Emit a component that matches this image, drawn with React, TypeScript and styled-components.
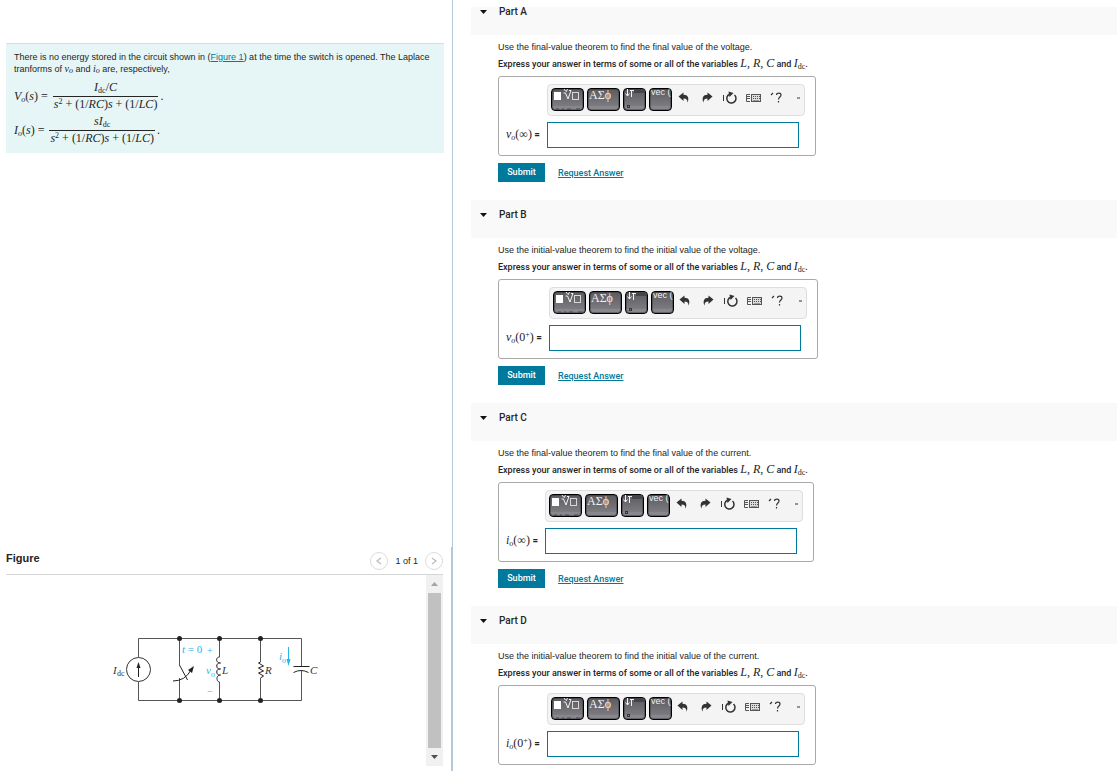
import React from "react";
import styled, { createGlobalStyle, css } from "styled-components";

const teal = "#007a9c";
const sans = '"Liberation Sans", Arial, sans-serif';
const ui = 'Roboto, "Liberation Sans", sans-serif';
const serif = '"Liberation Serif", "Times New Roman", serif';

const GlobalStyle = createGlobalStyle`
  * { box-sizing: border-box; }
  body { margin: 0; background: #fff; color: #252525; font-family: ${sans}; font-size: 9px; }
  button { font: inherit; padding: 0; cursor: pointer; }
  h1, h2, p { margin: 0; font-size: inherit; font-weight: inherit; }
`;

const Page = styled.div`
  display: grid;
  grid-template-columns: minmax(0, 453fr) minmax(0, 664fr);
  min-height: 100vh;
`;

const Left = styled.div`
  display: flex;
  flex-direction: column;
`;

const IntroPane = styled.section`
  flex: 1;
  padding: 43px 8px 0 6px;
  border-right: 1px solid #b3c9db;
`;

const Intro = styled.div`
  height: 110px;
  padding: 8px 8px 0;
  border-top: 1px solid #d4dfe1;
  background: #e6f6f6;
  line-height: 11px;
`;

const Link = styled.a`
  color: ${teal};
  text-decoration: underline;
`;

const RequestLink = styled(Link)`
  font-weight: 500;
  font-family: ${ui};
`;

const MathText = styled.span<{ $small?: boolean }>`
  font-family: ${serif};
  font-size: ${(p) => (p.$small ? 10 : 12)}px;
  line-height: 11px;
  white-space: nowrap;
  sub, sup { font-size: 8px; line-height: 0; }
  sub { vertical-align: ${(p) => (p.$small ? -1 : -2)}px; }
  sup { vertical-align: 4px; }
`;

const Equations = styled.div`
  display: flex;
  flex-direction: column;
  gap: 6px;
  padding-top: 7px;
`;

const Equation = styled.div`
  display: flex;
  align-items: center;
  height: 28px;
`;

const Fraction = styled.span`
  display: flex;
  flex-direction: column;
  align-items: center;
  margin: 0 2px 0 5px;
`;

const Numerator = styled.span`
  height: 14px;
  line-height: 11px;
`;

const Denominator = styled.span`
  height: 14px;
  padding: 2px 1px 0;
  border-top: 1px solid #252525;
  line-height: 11px;
`;

const FigurePane = styled.section`
  height: 224px;
  padding: 4px 8px 5px 6px;
  border-right: 2px solid #b3c9db;
`;

const FigureHead = styled.div`
  display: flex;
  align-items: center;
  height: 24px;
  border-bottom: 1px solid #d6d6d6;
`;

const FigureTitle = styled.h2`
  flex: 1;
  align-self: flex-start;
  font: 700 11px/15px ${sans};
`;

const Pager = styled.div`
  display: flex;
  align-items: center;
  gap: 7px;
  padding-bottom: 3px;
  font: 9px/12px ${sans};
`;

const Round = styled.button`
  display: grid;
  place-items: center;
  width: 18px;
  height: 18px;
  border: 1px solid #dcdcdc;
  border-radius: 50%;
  background: #fff;
`;

const FigureView = styled.div`
  display: flex;
  height: 191px;
`;

const Drawing = styled.div`
  flex: 1;
  padding: 50px 0 0 94px;
  svg { display: block; }
`;

const ScrollTrack = styled.div`
  display: flex;
  flex-direction: column;
  align-items: center;
  width: 17px;
  background: #f1f1f1;
`;

const ScrollButton = styled.button`
  display: grid;
  place-items: center;
  width: 17px;
  height: 18px;
  border: 0;
  background: none;
`;

const Thumb = styled.div`
  flex: 1;
  width: 13px;
  background: #c1c1c1;
`;

const Right = styled.main`
  padding: 7px 0 0 18px;
`;

const PartBlock = styled.section<{ $first: boolean }>`
  height: ${(p) => (p.$first ? 193 : 203)}px;
  &:last-child { height: auto; padding-bottom: 5px; }
`;

const PartHead = styled.header<{ $first: boolean }>`
  display: flex;
  align-items: flex-start;
  gap: 12px;
  height: ${(p) => (p.$first ? 28 : 38)}px;
  padding: ${(p) => (p.$first ? 0 : 10)}px 0 0 9px;
  background: #f9f9f9;
  font: 500 10px/10px ${ui};
`;

const Collapse = styled.button`
  display: grid;
  place-items: center;
  width: 7px;
  height: 10px;
  border: 0;
  background: none;
`;

const PartBody = styled.div`
  padding: 6px 0 0 27px;
`;

const Question = styled.p`
  line-height: 12px;
`;

const Instruction = styled.p`
  height: 12px;
  margin-top: 5px;
  font: 500 9px/12px ${ui};
`;

const AnswerBox = styled.div`
  display: flex;
  align-items: flex-end;
  width: fit-content;
  height: 80px;
  margin-top: 6px;
  padding: 7px 10px 7px 7px;
  border: 1px solid #a9a9a9;
  border-radius: 3px;
`;

const AnswerLabel = styled.label`
  height: 19px;
  padding-right: 7px;
  font: 500 10px/12px ${ui};
  white-space: nowrap;
`;

const Editor = styled.div`
  display: flex;
  flex-direction: column;
  gap: 6px;
`;

const Toolbar = styled.div`
  display: flex;
  align-items: flex-start;
  width: 258px;
  height: 32px;
  padding: 3px 0 0 3px;
  border: 1px solid #dedede;
  border-radius: 4px;
  background: #f4f4f4;
`;

const darkFace = css`
  border: 1px solid #000;
  border-radius: 4px;
  background: linear-gradient(#5c5b60, #79787d 74%, #66656a 76%, #88878e 80%, #88878e);
  box-shadow: inset 0 0 0 1px #2a2a2c66;
`;

const Palette = styled.button<{ $wide?: boolean }>`
  ${darkFace}
  flex: none;
  width: ${(p) => (p.$wide ? 33 : 23)}px;
  height: 23px;
  margin-right: 3px;
  overflow: hidden;
  color: #f2f2f2;
  text-align: left;
  svg { display: block; }
  &:nth-child(4) { margin-right: 0; }
`;

const Glyphs = styled.span<{ $sans?: boolean }>`
  display: block;
  height: 20px;
  padding-left: 1px;
  white-space: pre;
  font: ${(p) => (p.$sans ? `9px/4px ${sans}` : `12px/10px ${serif}`)};
`;

const Tool = styled.button`
  display: grid;
  flex: none;
  place-items: center;
  width: 23px;
  height: 20px;
  border: 0;
  background: none;
  color: #333;
`;

const MoreTool = styled(Tool)`
  justify-items: end;
  width: 13px;
`;

const AnswerInput = styled.input`
  width: 252px;
  height: 26px;
  padding: 0 4px;
  border: 1px solid ${teal};
  background: #fff;
  font: 12px ${serif};
  outline: none;
`;

const Actions = styled.div`
  display: flex;
  align-items: center;
  gap: 13px;
  margin-top: 7px;
`;

const Submit = styled.button`
  width: 47px;
  height: 19px;
  padding-bottom: 1px;
  border: 0;
  background: ${teal};
  color: #fff;
  font: 500 9px/18px ${ui};
`;

function Idc() {
  return <><i>I</i><sub>dc</sub></>;
}

function Denom() {
  return (
    <Denominator>
      <MathText><i>s</i><sup>2</sup> + (1/<i>RC</i>)<i>s</i> + (1/<i>LC</i>)</MathText>
    </Denominator>
  );
}

function Chevron({ flip }: { flip?: boolean }) {
  return (
    <svg width="6" height="8" viewBox="0 0 6 8" fill="none" stroke="#b4bcc4" strokeWidth="1.3">
      <path d={flip ? "M1 1l4 3-4 3" : "M5 1L1 4l4 3"} />
    </svg>
  );
}

function Circuit() {
  return (
    <svg width="220" height="84" viewBox="100 625 220 84" fill="none" stroke="#555" strokeWidth="1" role="img" aria-label="Circuit with current source, switch, inductor, resistor and capacitor">
      <path d="M138.500 657V638.500H301.500V666M138.500 682V700.500H301.500V671M179.500 638V665M179.500 678V700M219.500 638V657M219.500 682V700M260.500 638V662M260.500 678V700" />
      <circle cx="138.500" cy="669.500" r="12" stroke="#333" />
      <path d="M138.500 677V667" stroke="#222" />
      <path d="M138.500 662l-2 6h4z" fill="#222" stroke="none" />
      <path d="M179.500 665l8 15M173 681Q185 681 191 670" stroke="#222" />
      <path d="M194 666l-6 4 4 3z" fill="#222" stroke="none" />
      <path d="M219.500 657c-4 0-4 6 1 6c-5-1-5 7 0 6c-5-1-5 7 0 6c-5 0-4 7-1 7" stroke="#222" />
      <path d="M260.500 662l-2 1 5 3-5 2 5 3-5 2 5 3-3 2" stroke="#222" />
      <path d="M293.500 666.500h16M293.500 672.500q7.500-4 15 0" stroke="#222" />
      <g fill="#222" stroke="none">
        {[179.5, 219.5, 260.5].map((x) => (
          <React.Fragment key={x}>
            <circle cx={x} cy="638.500" r="2.500" />
            <circle cx={x} cy="700.500" r="2.500" />
          </React.Fragment>
        ))}
      </g>
      <path d="M288.500 647v12" stroke="#27b5e8" />
      <path d="M288.500 666l-2-7h4z" fill="#27b5e8" stroke="none" />
      <g fill="#333" stroke="none" fontFamily={serif} fontSize="11" fontStyle="italic">
        <text x="113" y="674">I</text>
        <text x="117" y="676" fontSize="8" fontStyle="normal">dc</text>
        <text x="222" y="674">L</text>
        <text x="265" y="674">R</text>
        <text x="310" y="674">C</text>
      </g>
      <g fill="#27b5e8" stroke="none" fontFamily={serif} fontSize="11" fontStyle="italic">
        <text x="182" y="653">t<tspan fontStyle="normal"> = 0</tspan></text>
        <text x="207" y="654" fontSize="10" fontStyle="normal">+</text>
        <text x="206" y="674">v</text>
        <text x="211" y="677" fontSize="8">o</text>
        <text x="279" y="660">i</text>
        <text x="282" y="663" fontSize="8">o</text>
        <text x="207" y="695" fontSize="10" fontStyle="normal">−</text>
      </g>
    </svg>
  );
}

function TemplateIcon() {
  return (
    <svg width="31" height="21" viewBox="0 0 31 21" fill="none" stroke="#f2f2f2">
      <rect x="2" y="3" width="7" height="8" fill="#fff" stroke="none" />
      <path d="M11.500 4h2l2.500 6 3-8.500M12 0l1.500 2M15.500 0l-1.500 3M17 1.500h2" />
      <rect x="20.500" y="3.500" width="6" height="7" stroke="#d8d8d8" />
      <path d="M4 20h3M10 20h2M15 20h4M24 20h4" stroke="#454449" />
    </svg>
  );
}

function ArrowsIcon() {
  return (
    <svg width="21" height="21" viewBox="0 0 21 21" fill="none" stroke="#f2f2f2">
      <path d="M10 2h11" stroke="#454449" strokeWidth="4" />
      <path d="M3.500 0v7M1.500 4.500l2 2.500 2-2.500M7.500 8V1.500M6 1.500h4" />
      <rect x="3.500" y="16.500" width="2" height="2" stroke="#353438" />
    </svg>
  );
}

function UndoIcon({ redo }: { redo?: boolean }) {
  return (
    <svg width="12" height="12" viewBox="0 0 12 12" fill="currentColor">
      <path
        transform={redo ? "matrix(-1 0 0 1 12 0)" : undefined}
        d="M0.500 4.500L5.500 0.500v2.200c4.500 0 6 3.300 4 8c0-3-1-4.200-4-4.200V9z"
      />
    </svg>
  );
}

function ResetIcon() {
  return (
    <svg width="16" height="14" viewBox="0 0 16 14" fill="none" stroke="currentColor">
      <path d="M1.500 4v6" />
      <path d="M7.500 3.200A4.600 4.600 0 1 0 12.500 4" strokeWidth="1.500" />
      <path d="M6.500 0.500l5 1.500-4 4z" fill="currentColor" stroke="none" />
    </svg>
  );
}

function KeyboardIcon() {
  return (
    <svg width="16" height="10" viewBox="0 0 16 10" fill="none" stroke="#555">
      <path d="M5 1.500h-3.500v7h3.500M2 3.500h3M2 5.500h3" />
      <rect x="6.500" y="1.500" width="9" height="7" fill="#ddd" />
      <path d="M8 3.500h7M8 5.500h7" strokeDasharray="1 1" />
      <path d="M8 7.500h6" stroke="#999" />
    </svg>
  );
}

function HelpIcon() {
  return (
    <svg width="14" height="14" viewBox="0 0 14 14" fill="none" stroke="currentColor" strokeWidth="1.200">
      <path d="M2 4l2-2M7.500 4C7.500 1.500 12 1.500 12 4C12 6 9.500 6 9.500 8.500" />
      <path d="M9.500 10v1.500" />
    </svg>
  );
}

function Part({ name, question, label }: { name: string; question: string; label: React.ReactNode }) {
  const first = name === "A";
  const id = `answer-${name}`;
  return (
    <PartBlock $first={first}>
      <PartHead $first={first}>
        <Collapse aria-label={`Collapse part ${name}`}>
          <svg width="7" height="4" viewBox="0 0 7 4"><path d="M0 0h7L3.500 4z" fill="#111" /></svg>
        </Collapse>
        <h2>Part {name}</h2>
      </PartHead>
      <PartBody>
        <Question>{question}</Question>
        <Instruction>
          Express your answer in terms of some or all of the variables{" "}
          <MathText><i>L</i>, <i>R</i>, <i>C</i></MathText> and <MathText><Idc /></MathText>.
        </Instruction>
        <AnswerBox>
          <AnswerLabel htmlFor={id}><MathText>{label}</MathText> =</AnswerLabel>
          <Editor>
            <Toolbar>
              <Palette $wide aria-label="Templates"><TemplateIcon /></Palette>
              <Palette $wide aria-label="Greek letters"><Glyphs>ΑΣϕ</Glyphs></Palette>
              <Palette aria-label="Arrows"><ArrowsIcon /></Palette>
              <Palette aria-label="Vectors"><Glyphs $sans>vec (</Glyphs></Palette>
              <Tool aria-label="Undo"><UndoIcon /></Tool>
              <Tool aria-label="Redo"><UndoIcon redo /></Tool>
              <Tool aria-label="Reset"><ResetIcon /></Tool>
              <Tool aria-label="Keyboard shortcuts"><KeyboardIcon /></Tool>
              <Tool aria-label="Help"><HelpIcon /></Tool>
              <MoreTool aria-label="More">
                <svg width="3" height="2" viewBox="0 0 3 2"><path d="M0 1h3" stroke="#333" /></svg>
              </MoreTool>
            </Toolbar>
            <AnswerInput id={id} type="text" />
          </Editor>
        </AnswerBox>
        {name !== "D" && (
          <Actions>
            <Submit>Submit</Submit>
            <RequestLink href="#request">Request Answer</RequestLink>
          </Actions>
        )}
      </PartBody>
    </PartBlock>
  );
}

export default function App() {
  return (
    <Page>
      <GlobalStyle />
      <Left>
        <IntroPane>
          <Intro>
            <p>
              There is no energy stored in the circuit shown in (<Link href="#figure">Figure 1</Link>) at the time the switch is opened. The Laplace tranforms of{" "}
              <MathText $small><i>v</i><sub><i>o</i></sub></MathText> and <MathText $small><i>i</i><sub><i>o</i></sub></MathText> are, respectively,
            </p>
            <Equations>
              <Equation>
                <MathText><i>V</i><sub><i>o</i></sub>(<i>s</i>) =</MathText>
                <Fraction>
                  <Numerator><MathText><Idc />/<i>C</i></MathText></Numerator>
                  <Denom />
                </Fraction>
                <MathText>.</MathText>
              </Equation>
              <Equation>
                <MathText><i>I</i><sub><i>o</i></sub>(<i>s</i>) =</MathText>
                <Fraction>
                  <Numerator><MathText><i>s</i><Idc /></MathText></Numerator>
                  <Denom />
                </Fraction>
                <MathText>.</MathText>
              </Equation>
            </Equations>
          </Intro>
        </IntroPane>
        <FigurePane id="figure">
          <FigureHead>
            <FigureTitle>Figure</FigureTitle>
            <Pager>
              <Round aria-label="Previous figure"><Chevron /></Round>
              <span>1 of 1</span>
              <Round aria-label="Next figure"><Chevron flip /></Round>
            </Pager>
          </FigureHead>
          <FigureView>
            <Drawing><Circuit /></Drawing>
            <ScrollTrack>
              <ScrollButton aria-label="Scroll up">
                <svg width="7" height="4" viewBox="0 0 7 4"><path d="M0 4h7L3.500 0z" fill="#a3a3a3" /></svg>
              </ScrollButton>
              <Thumb />
              <ScrollButton aria-label="Scroll down">
                <svg width="7" height="4" viewBox="0 0 7 4"><path d="M0 0h7L3.500 4z" fill="#505050" /></svg>
              </ScrollButton>
            </ScrollTrack>
          </FigureView>
        </FigurePane>
      </Left>
      <Right>
        <Part name="A" question="Use the final-value theorem to find the final value of the voltage." label={<><i>v<sub>o</sub></i>(∞)</>} />
        <Part name="B" question="Use the initial-value theorem to find the initial value of the voltage." label={<><i>v<sub>o</sub></i>(0<sup>+</sup>)</>} />
        <Part name="C" question="Use the final-value theorem to find the final value of the current." label={<><i>i<sub>o</sub></i>(∞)</>} />
        <Part name="D" question="Use the initial-value theorem to find the initial value of the current." label={<><i>i<sub>o</sub></i>(0<sup>+</sup>)</>} />
      </Right>
    </Page>
  );
}
